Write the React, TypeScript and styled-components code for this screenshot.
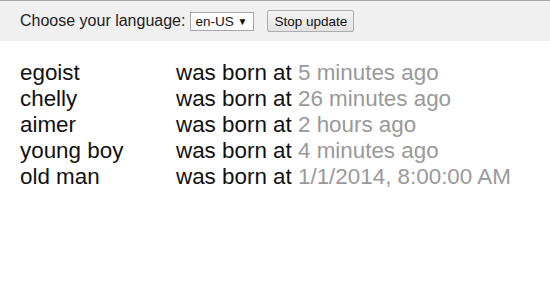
import { useState } from "react";
import styled, { createGlobalStyle } from "styled-components";

const GlobalStyle = createGlobalStyle`
  body {
    margin: 0;
    background: #fff;
    font-family: "Liberation Sans", Arial, sans-serif;
    color: #111;
  }
`;

const Toolbar = styled.header`
  display: flex;
  align-items: center;
  height: 40px;
  padding: 0 20px;
  background: #f0f0f0;
  border-top: 1px solid #a8a8a8;
  font-size: 16px;
  color: #222;
`;

const Label = styled.label`
  margin-right: 5px;
`;

const SelectWrap = styled.span`
  position: relative;
  display: inline-flex;
  margin-right: 13px;
`;

const Select = styled.select`
  appearance: none;
  width: 64px;
  height: 19px;
  padding: 0 0 0 4px;
  border: 1px solid #a6a6a6;
  border-radius: 0;
  background: #fff;
  font-family: "Liberation Sans", Arial, sans-serif;
  font-size: 13.5px;
  color: #111;
  outline: none;
`;

const Arrow = styled.span`
  position: absolute;
  right: 7px;
  top: 4px;
  font-size: 10px;
  color: #111;
  pointer-events: none;
`;

const Button = styled.button`
  height: 22px;
  width: 87px;
  padding: 0;
  border: 1px solid #adadad;
  border-radius: 2px;
  background: linear-gradient(#f4f4f4, #e2e2e2);
  font-family: "Liberation Sans", Arial, sans-serif;
  font-size: 13.5px;
  color: #111;
`;

const List = styled.div`
  padding: 19px 20px;
  font-size: 22.4px;
  line-height: 26px;
`;

const Row = styled.div`
  display: grid;
  grid-template-columns: 156px auto;
`;

const Time = styled.span`
  color: #999;
`;

const people = [
  { name: "egoist", born: "5 minutes ago" },
  { name: "chelly", born: "26 minutes ago" },
  { name: "aimer", born: "2 hours ago" },
  { name: "young boy", born: "4 minutes ago" },
  { name: "old man", born: "1/1/2014, 8:00:00 AM" },
];

const App = () => {
  const [lang, setLang] = useState("en-US");
  const [running, setRunning] = useState(true);

  return (
    <>
      <GlobalStyle />
      <Toolbar>
        <Label htmlFor="lang">Choose your language:</Label>
        <SelectWrap>
          <Select id="lang" value={lang} onChange={(e) => setLang(e.target.value)}>
            <option>en-US</option>
            <option>zh-CN</option>
            <option>ja-JP</option>
          </Select>
          <Arrow>▼</Arrow>
        </SelectWrap>
        <Button onClick={() => setRunning(!running)}>
          {running ? "Stop update" : "Start update"}
        </Button>
      </Toolbar>
      <List>
        {people.map((p) => (
          <Row key={p.name}>
            <span>{p.name}</span>
            <span>
              was born at <Time>{p.born}</Time>
            </span>
          </Row>
        ))}
      </List>
    </>
  );
};

export default App;
